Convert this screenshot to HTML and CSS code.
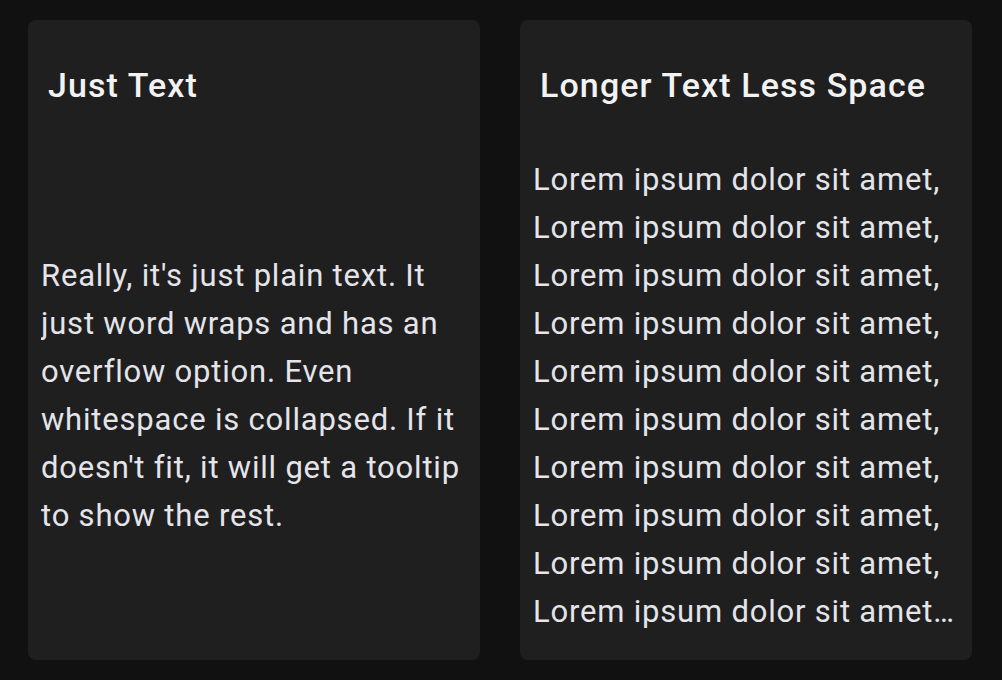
FILE: index.html
```html
<!DOCTYPE html>
<html lang="en">
<head>
  <meta charset="UTF-8" />
  <meta name="viewport" content="width=device-width, initial-scale=1.0" />
  <title>Text Cards</title>
  <link rel="stylesheet" href="styles.css">
</head>
<body>

  <div class="cards">
    <div class="card">
      <h2 class="card-title">Just Text</h2>
      <div class="card-body">
        <p class="card-text">Really, it's just plain text.     It just word wraps and has an overflow option.   Even whitespace is collapsed. If it doesn't fit, it will get a tooltip to show the rest.</p>
      </div>
    </div>

    <div class="card">
      <h2 class="card-title">Longer Text Less Space</h2>
      <div class="card-body">
        <p class="card-text clamp" title="Lorem ipsum dolor sit amet, ...">Lorem ipsum dolor sit amet, Lorem ipsum dolor sit amet, Lorem ipsum dolor sit amet, Lorem ipsum dolor sit amet, Lorem ipsum dolor sit amet, Lorem ipsum dolor sit amet, Lorem ipsum dolor sit amet, Lorem ipsum dolor sit amet, Lorem ipsum dolor sit amet, Lorem ipsum dolor sit amet, Lorem ipsum dolor sit amet, Lorem ipsum dolor sit amet, Lorem ipsum dolor sit amet,</p>
      </div>
    </div>
  </div>

</body>
</html>
```

FILE: styles.css
```css
html, body {
  margin: 0; padding: 0;
  width: 100%;
  height: 100%;
  overflow: hidden;
  font-family: 'Roboto', sans-serif;
  background: #111111;
}

.cards {
  display: grid;
  grid-template-columns: 452px 452px;
  gap: 40px;
  padding: 20px 0 0 28px;
}

.card {
  height: 640px;
  box-sizing: border-box;
  padding: 24px 13px;
  background-color: #1f1f1f;
  border-radius: 8px;
  display: flex;
  flex-direction: column;
}

.card-title {
  margin: 0;
  padding: 21px 7px;
  font-size: 34px;
  line-height: 40px;
  font-weight: 500;
  letter-spacing: 1.1px;
  color: #f2f2f2;
  flex-shrink: 0;
}

.card-body {
  flex: 1;
  margin-top: 30px;
  display: flex;
  align-items: center;
  overflow: hidden;
}

.card-text {
  margin: 0;
  font-size: 31px;
  line-height: 48px;
  letter-spacing: 0.8px;
  color: #e4e4ea;
}

.clamp {
  display: -webkit-box;
  -webkit-box-orient: vertical;
  -webkit-line-clamp: 10;
  overflow: hidden;
}
```
